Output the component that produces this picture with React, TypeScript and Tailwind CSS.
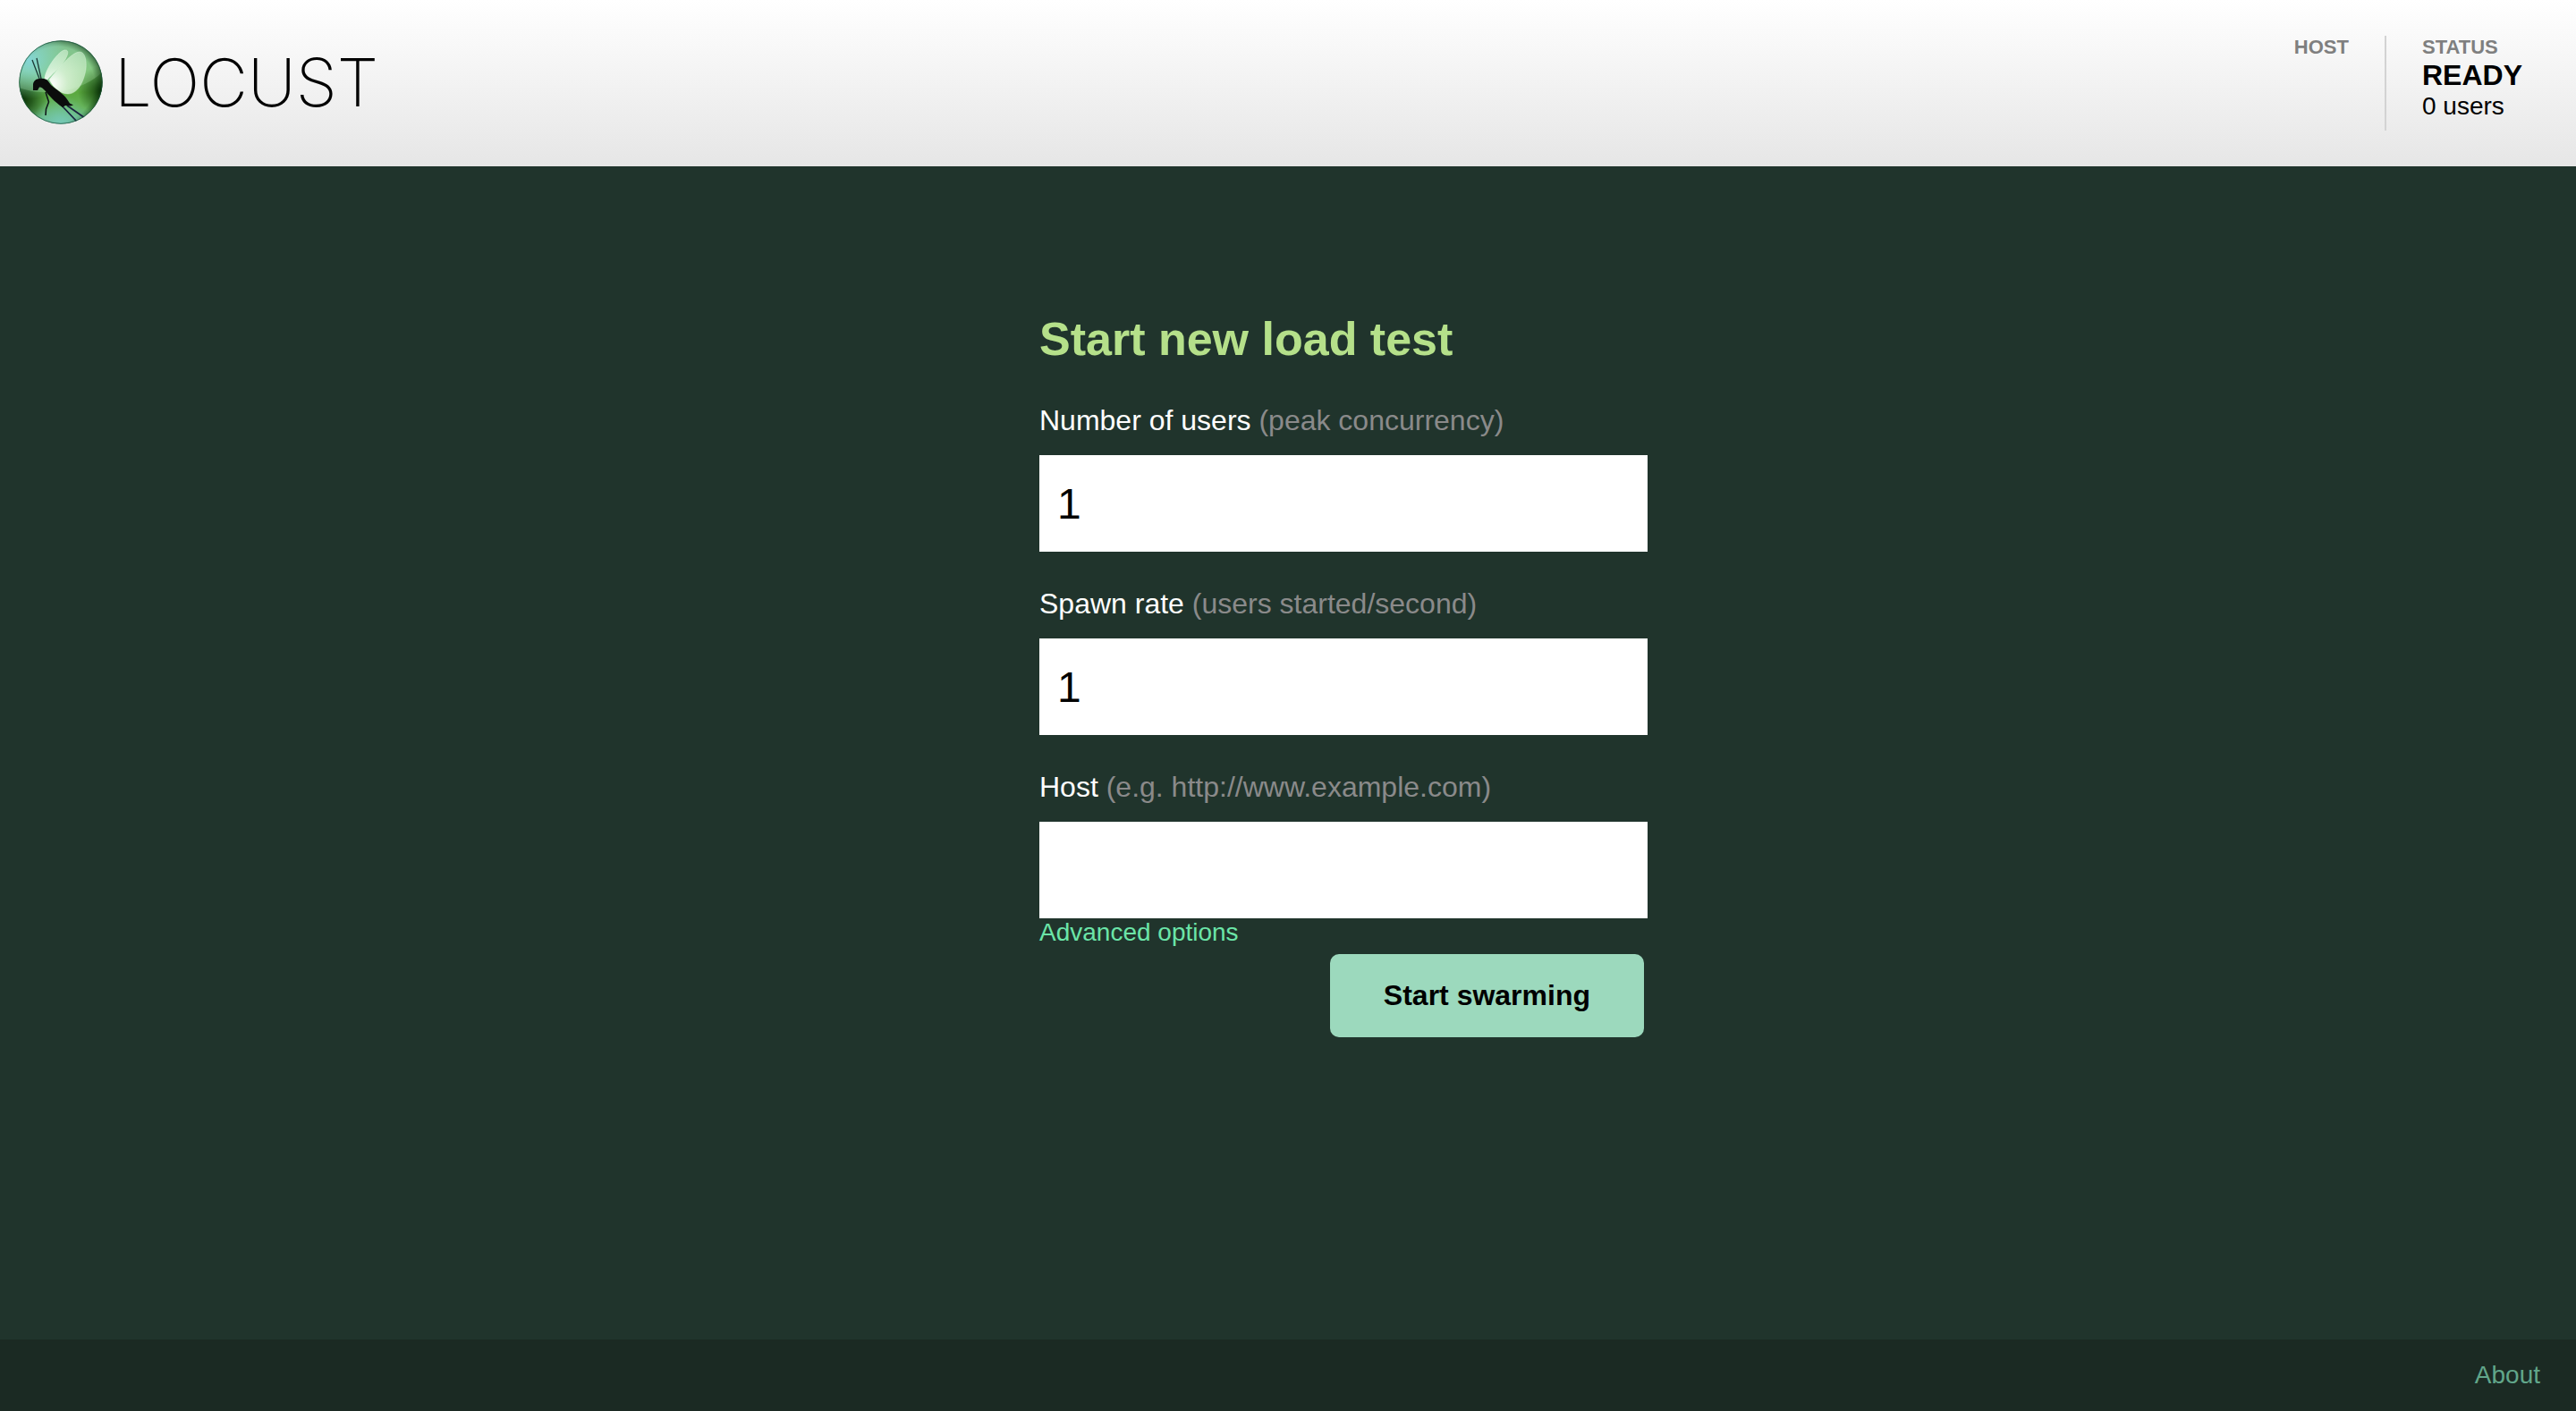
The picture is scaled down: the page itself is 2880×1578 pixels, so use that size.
import React from "react";

function LocustMark() {
  return (
    <svg viewBox="-1 -1 96 96" className="size-24 shrink-0" aria-hidden="true">
      <defs>
        <linearGradient id="base" x1="0" y1="0" x2="0" y2="1">
          <stop offset="0" stopColor="#6fb58c" />
          <stop offset="0.35" stopColor="#74bd72" />
          <stop offset="0.62" stopColor="#5aa83e" />
          <stop offset="0.8" stopColor="#66b45c" />
          <stop offset="1" stopColor="#68b898" />
        </linearGradient>
        <radialGradient id="shadeLeft" cx="0.02" cy="0.7" r="0.34">
          <stop offset="0" stopColor="#062c04" />
          <stop offset="0.4" stopColor="#0a3406" stopOpacity="0.7" />
          <stop offset="1" stopColor="#0c3c08" stopOpacity="0" />
        </radialGradient>
        <radialGradient id="shadeRight" cx="1" cy="0.6" r="0.3">
          <stop offset="0" stopColor="#062c04" />
          <stop offset="0.4" stopColor="#0a3406" stopOpacity="0.6" />
          <stop offset="1" stopColor="#0c3c08" stopOpacity="0" />
        </radialGradient>
        <radialGradient id="edge" cx="0.46" cy="0.52" r="0.54">
          <stop offset="0.82" stopColor="#0c3c10" stopOpacity="0" />
          <stop offset="1" stopColor="#062808" stopOpacity="0.55" />
        </radialGradient>
        <radialGradient id="sky" cx="0.12" cy="0.24" r="0.46">
          <stop offset="0" stopColor="#84d6da" stopOpacity="0.95" />
          <stop offset="1" stopColor="#86d8c8" stopOpacity="0" />
        </radialGradient>
        <radialGradient id="floor" cx="0.5" cy="1" r="0.34">
          <stop offset="0" stopColor="#78ccba" stopOpacity="0.9" />
          <stop offset="1" stopColor="#7ad0c0" stopOpacity="0" />
        </radialGradient>
        <radialGradient id="glow" cx="37" cy="49" r="46" gradientUnits="userSpaceOnUse">
          <stop offset="0" stopColor="#ffffff" />
          <stop offset="0.4" stopColor="#e2f7e0" stopOpacity="0.8" />
          <stop offset="1" stopColor="#d4f2d4" stopOpacity="0.55" />
        </radialGradient>
        <clipPath id="ball">
          <circle cx="47" cy="47" r="46.5" />
        </clipPath>
      </defs>
      <g clipPath="url(#ball)">
        <rect width="94" height="94" fill="url(#base)" />
        <rect width="94" height="94" fill="url(#shadeLeft)" />
        <rect width="94" height="94" fill="url(#shadeRight)" />
        <path d="M0 53Q22 61 48 57Q76 52 93 36V0H0Z" fill="#a9e0a4" fillOpacity="0.3" />
        <rect width="94" height="94" fill="url(#edge)" />
        <rect width="94" height="94" fill="url(#sky)" />
        <rect width="94" height="94" fill="url(#floor)" />
        <g stroke="#e6fae6" strokeOpacity="0.5" strokeWidth="0.8">
          <path d="M29 44C28 35 43 13 51 11C57 10 55 17 51 23C45 32 37 38 32 44Z" fill="url(#glow)" />
          <path d="M34 44C45 31 58 14 68 13C74 13 76 23 75 32C73 46 66 60 55 60C47 60 39 54 34 44Z" fill="url(#glow)" />
        </g>
        <g fill="none" strokeLinejoin="round">
          <path d="M15 22L23 43M20 20L25 43" strokeWidth="1.3" stroke="#1c3a36" />
          <path d="M30 58L33.5 69L30.5 77L30 84" strokeWidth="1.6" stroke="#10181a" />
          <path d="M47 72L65 91M54 73L74 87" strokeWidth="1.8" stroke="#1a2440" />
        </g>
        <path
          d="M16 56L16 49C17 45 19 43.5 23 43C28 42 32 44 33 46L36 50C43 56 50 60 54 66L57 70.5L61 72.5L58 73.5L52 73L49 75C40 69 34 62 29 56C27 54 25 52 23 52.5L21 56Z"
          fill="#0b0d0c"
        />
      </g>
      <circle cx="47" cy="47" r="46.3" fill="none" stroke="#1c5440" strokeWidth="1" strokeOpacity="0.75" />
    </svg>
  );
}

type FieldProps = { id: string; label: string; hint: string; value?: string };

function Field({ id, label, hint, value = "" }: FieldProps) {
  return (
    <div className="flex flex-col">
      <label htmlFor={id} className="pb-5 text-[32px] leading-[37px] text-white">
        {label} <span className="text-[#8a8a8a]">{hint}</span>
      </label>
      <input
        id={id}
        name={id}
        type="text"
        defaultValue={value}
        className="h-27 w-full bg-white px-5 text-5xl text-black outline-none"
      />
    </div>
  );
}

export default function App() {
  return (
    <div className="flex min-h-screen flex-col bg-[#20342c] font-['Liberation_Sans',Arial,sans-serif]">
      <header className="flex items-start justify-between bg-linear-to-b from-white to-[#e6e6e6] py-10 pr-15 pl-5">
        <a href="#" className="flex h-26 items-center gap-3 text-black">
          <LocustMark />
          <span className="font-[Inter,sans-serif] text-[74px] leading-none font-extralight">LOCUST</span>
        </a>
        <dl className="flex h-[106px]">
          <div className="border-r-2 border-[#d3d3d3] pr-10">
            <dt className="text-[22px] leading-[26px] font-bold text-[#7f7f7f]">HOST</dt>
          </div>
          <div className="pl-10">
            <dt className="text-[22px] leading-[26px] font-bold text-[#7f7f7f]">STATUS</dt>
            <dd className="text-[32px] leading-[37px] font-bold text-black">READY</dd>
            <dd className="text-[28px] leading-8 text-black">0 users</dd>
          </div>
        </dl>
      </header>

      <main className="flex flex-1 flex-col items-center pt-40">
        <form className="ml-31 flex w-170 flex-col" onSubmit={(e) => e.preventDefault()}>
          <h2 className="pb-10 text-[52px] leading-[66px] font-bold text-[#b5e08a]">Start new load test</h2>
          <div className="flex flex-col gap-10">
            <Field id="user_count" label="Number of users" hint="(peak concurrency)" value="1" />
            <Field id="spawn_rate" label="Spawn rate" hint="(users started/second)" value="1" />
            <Field id="host" label="Host" hint="(e.g. http://www.example.com)" />
          </div>
          <a href="#" className="self-start text-[28px] leading-8 text-[#6be5a8]">Advanced options</a>
          <button
            type="submit"
            className="mt-2 mr-1 self-end rounded-[10px] bg-[#9cd9bd] px-15 py-7 text-[32px] leading-[37px] font-bold text-black"
          >
            Start swarming
          </button>
        </form>
      </main>

      <footer className="flex h-20 items-center justify-end bg-[#1b2a23] px-10">
        <a href="#" className="text-[28px] leading-8 text-[#61a68a]">About</a>
      </footer>
    </div>
  );
}
